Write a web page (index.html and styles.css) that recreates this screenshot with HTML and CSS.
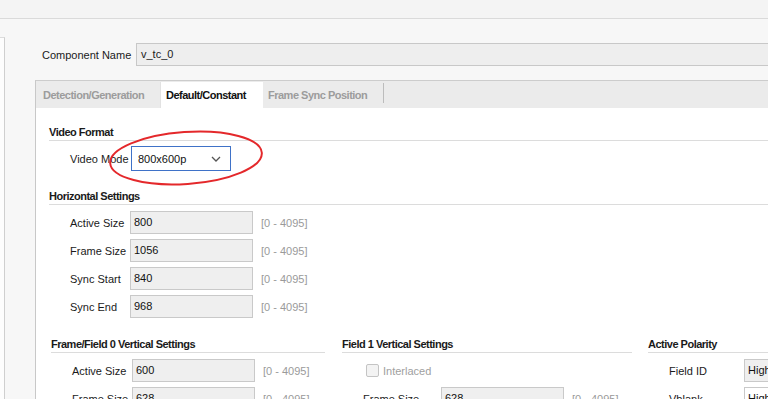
FILE: index.html
```html
<!DOCTYPE html>
<html lang="en">
<head>
<title>Customize IP - Video Timing Controller</title>
<link rel="stylesheet" href="styles.css">
</head>
<body>
<div class="topbar"></div>

<div class="page">
  <div class="side"></div>

  <div class="main">
    <div class="comp-row">
      <span class="comp-label">Component Name</span>
      <span class="comp-field">v_tc_0</span>
    </div>

    <div class="tabpanel">
      <div class="tabbar">
        <span class="tab t1">Detection/Generation</span>
        <span class="tab t2 active">Default/Constant</span>
        <span class="tab t3">Frame Sync Position</span>
        <span class="tab-sep"></span>
      </div>

      <div class="content">
        <!-- Video format -->
        <div class="group">
          <div class="group-title">Video Format</div>
          <div class="row first">
            <span class="label">Video Mode</span>
            <span class="select">
              800x600p
              <svg class="chev" width="10" height="6" viewBox="0 0 10 6">
                <polyline points="1,1 5,5 9,1" fill="none" stroke="#555" stroke-width="1.3"/>
              </svg>
            </span>
          </div>
        </div>

        <!-- Horizontal -->
        <div class="group hgroup">
          <div class="group-title">Horizontal Settings</div>
          <div class="row first">
            <span class="label">Active Size</span>
            <span class="field">800</span>
            <span class="range">[0 - 4095]</span>
          </div>
          <div class="row">
            <span class="label">Frame Size</span>
            <span class="field">1056</span>
            <span class="range">[0 - 4095]</span>
          </div>
          <div class="row">
            <span class="label">Sync Start</span>
            <span class="field">840</span>
            <span class="range">[0 - 4095]</span>
          </div>
          <div class="row">
            <span class="label">Sync End</span>
            <span class="field">968</span>
            <span class="range">[0 - 4095]</span>
          </div>
        </div>

        <!-- Vertical settings, three columns -->
        <div class="columns">
          <div class="col col1">
            <div class="group-title">Frame/Field 0 Vertical Settings</div>
            <div class="row first">
              <span class="label">Active Size</span>
              <span class="field">600</span>
              <span class="range">[0 - 4095]</span>
            </div>
            <div class="row">
              <span class="label">Frame Size</span>
              <span class="field">628</span>
              <span class="range">[0 - 4095]</span>
            </div>
          </div>

          <div class="col col2">
            <div class="group-title">Field 1 Vertical Settings</div>
            <div class="row first check-row">
              <span class="checkbox"></span>
              <span class="check-label">Interlaced</span>
            </div>
            <div class="row">
              <span class="label wide">Frame Size</span>
              <span class="field">628</span>
              <span class="range">[0 - 4095]</span>
            </div>
          </div>

          <div class="col col3">
            <div class="group-title">Active Polarity</div>
            <div class="row first">
              <span class="label mid">Field ID</span>
              <span class="field">High</span>
            </div>
            <div class="row">
              <span class="label mid">Vblank</span>
              <span class="field white">High</span>
            </div>
          </div>
        </div>
      </div>
    </div>
  </div>
</div>

<!-- hand drawn highlight round the video mode box -->
<svg class="circle" width="170" height="66" viewBox="0 0 170 66">
  <ellipse cx="80" cy="31" rx="76" ry="26" fill="none" stroke="#e4282b" stroke-width="2"
    transform="rotate(-4 80 31)"/>
</svg>
</body>
</html>
```

FILE: styles.css
```css
body {
  margin: 0;
  background: #f7f7f7;
  font-family: "Liberation Sans", Arial, sans-serif;
  font-size: 11px;
  color: #1a1a1a;
  overflow: hidden;
  position: relative;
  height: 399px;
}

.topbar {
  height: 18px;
  background: #f4f4f4;
  border-bottom: 1px solid #dadada;
}

.page {display: flex;}

.side {
  flex: none;
  width: 4px;
  height: 400px;
  margin-top: 18px;
  background: #fdfdfd;
  border-top: 1px solid #dcdcdc;
  border-right: 1px solid #cfcfcf;
}

.main {
  flex: none;
  width: 1000px;
  padding-left: 30px;
}

/* component name */
.comp-row {
  display: flex;
  align-items: center;
  margin-top: 24px;
  padding-left: 7px;
}
.comp-label {width: 94px;}
.comp-field {
  width: 700px;
  height: 21px;
  line-height: 21px;
  padding-left: 4px;
  background: #eeeeee;
  border: 1px solid #c8c8c8;
}

/* tabs */
.tabpanel {
  margin-top: 14px;
  border-top: 1px solid #cccccc;
  border-left: 1px solid #c8c8c8;
}
.tabbar {
  display: flex;
  height: 27px;
  background: #ebebeb;
}
.tab {
  box-sizing: border-box;
  height: 26px;
  margin-top: 1px;
  line-height: 26px;
  font-weight: bold;
  letter-spacing: -0.5px;
  color: #9c9c9c;
}
.t1 {width: 125px; padding-left: 7px; border-right: 1px solid #e2e2e2;}
.t2 {width: 102px; padding-left: 5px;}
.t3 {width: 120px; padding-left: 5px;}
.tab.active {background: #ffffff; color: #111;}
.tab-sep {
  width: 1px;
  height: 20px;
  margin-top: 2px;
  background: #bcbcbc;
}

.content {
  background: #ffffff;
  padding: 17px 0 40px 13px;
}

.group-title {
  line-height: 14px;
  padding-bottom: 1px;
  font-weight: bold;
  letter-spacing: -0.5px;
  color: #1a1a1a;
  border-bottom: 1px solid #dcdcdc;
}

.row {
  display: flex;
  align-items: center;
  height: 23px;
  margin-top: 5px;
  padding-left: 21px;
}
.row.first {margin-top: 6px;}

.label {width: 60px; flex: none;}
.label.wide {width: 78px;}
.label.mid {width: 75px;}

.field {
  box-sizing: border-box;
  width: 123px;
  height: 23px;
  line-height: 21px;
  padding-left: 3px;
  background: #efefef;
  border: 1px solid #c9c9c9;
  color: #111;
}
.field.white {background: #ffffff;}

.range {
  margin-left: 8px;
  color: #9a9a9a;
}

.select {
  box-sizing: border-box;
  display: flex;
  align-items: center;
  justify-content: space-between;
  width: 100px;
  height: 25px;
  margin-left: 1px;
  padding: 0 9px 0 6px;
  background: #ffffff;
  border: 1px solid #3f72c8;
  color: #111;
}

.hgroup {margin-top: 19px;}

.columns {
  display: flex;
  margin-top: 19px;
  padding-left: 2px;
}
.col1 {width: 274px; margin-right: 17px;}
.col2 {width: 290px; margin-right: 16px;}
.col3 {flex: 1;}

.check-row {padding-left: 24px;}
.checkbox {
  box-sizing: border-box;
  width: 13px;
  height: 13px;
  border: 1px solid #c4c4c4;
  border-radius: 2px;
  background: #f3f3f3;
}
.check-label {
  margin-left: 4px;
  color: #a0a0a0;
}

.circle {
  position: absolute;
  left: 106px;
  top: 127px;
}
```
